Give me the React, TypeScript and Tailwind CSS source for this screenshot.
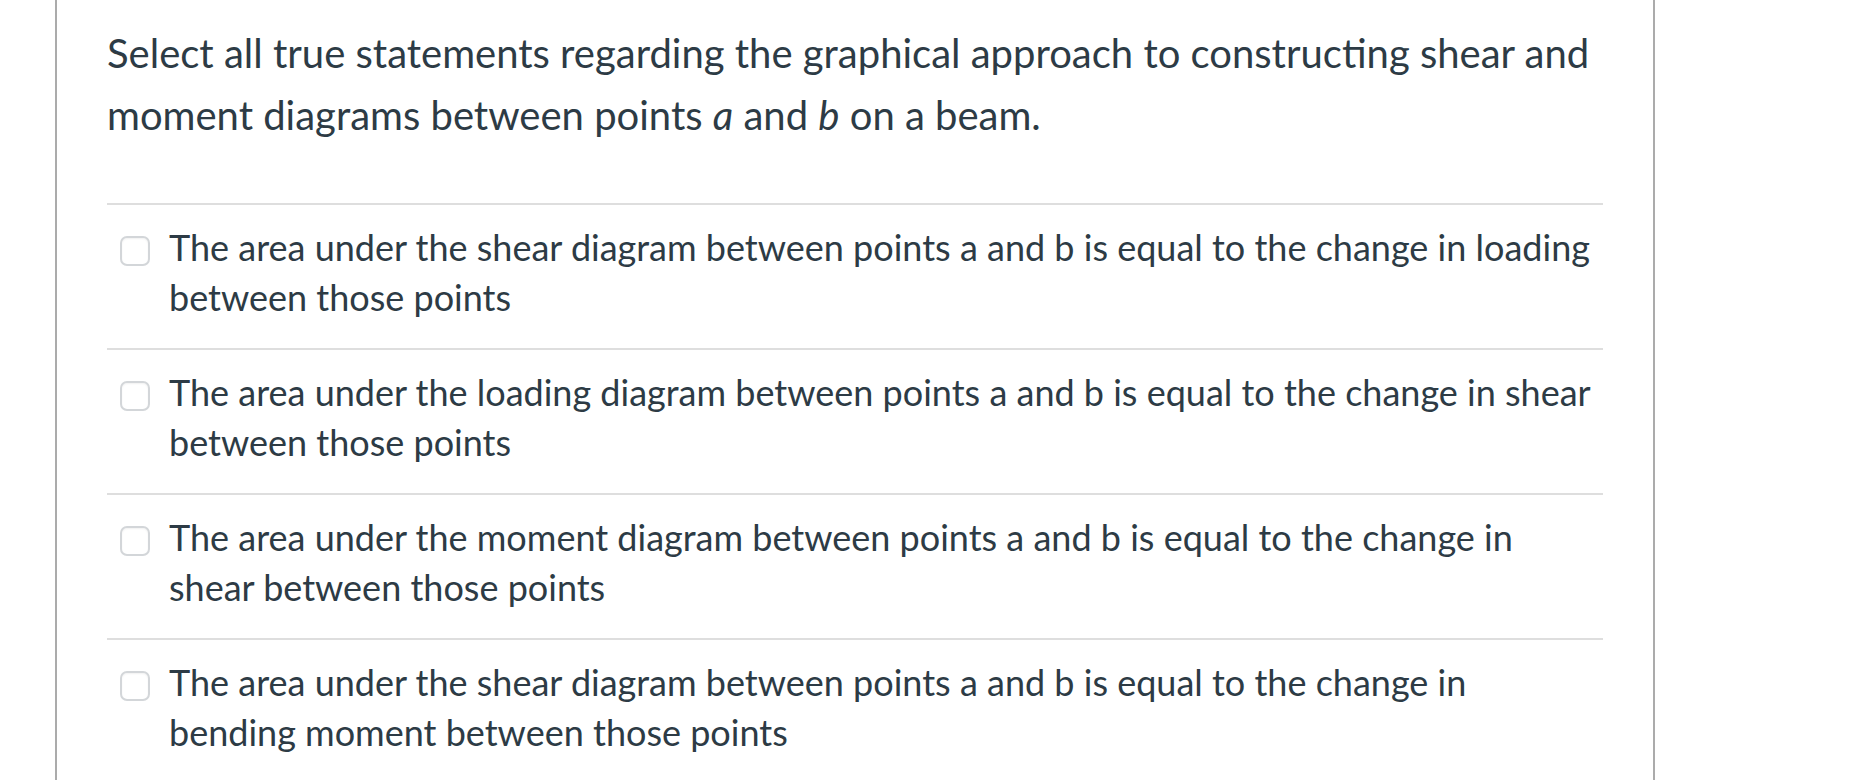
import React from 'react';

const options = [
  'The area under the shear diagram between points a and b is equal to the change in loading between those points',
  'The area under the loading diagram between points a and b is equal to the change in shear between those points',
  'The area under the moment diagram between points a and b is equal to the change in shear between those points',
  'The area under the shear diagram between points a and b is equal to the change in bending moment between those points',
];

function Checkbox() {
  return (
    <span className="mt-[14px] ml-[13px] block h-[30px] w-[30px] shrink-0 rounded-[7px] border-2 border-[#d3d6d9] bg-white shadow-[inset_0_1px_2px_rgba(0,0,0,0.06)]" />
  );
}

export default function App() {
  return (
    <div className="h-[780px] w-full overflow-hidden bg-white" style={{ fontFamily: 'Lato, "Open Sans", sans-serif' }}>
      <div className="ml-[55px] h-full w-[1600px] border-x-2 border-[#ababab] px-[50px] pt-[22px] text-[#2d3b45]">
        <p className="text-[40px] leading-[62px]">
          Select all true statements regarding the graphical approach to constructing shear and moment diagrams between points <i>a</i> and <i>b</i> on a beam.
        </p>
        <div className="mt-[57px]">
          {options.map((opt) => (
            <label key={opt} className="flex items-start border-t-2 border-[#dedede] pt-[17px] pb-[26px]">
              <Checkbox />
              <span className="ml-[19px] pr-[8px] text-[36px] leading-[50px]">{opt}</span>
            </label>
          ))}
        </div>
      </div>
    </div>
  );
}
